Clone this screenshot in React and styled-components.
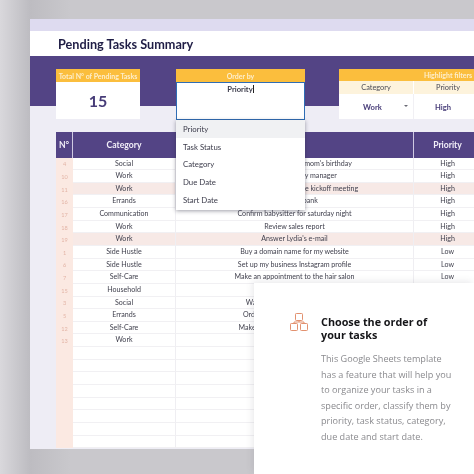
import React from "react";
import styled, { createGlobalStyle } from "styled-components";

const GlobalStyle = createGlobalStyle`
  html, body {
    margin: 0;
    padding: 0;
    width: 474px;
    height: 474px;
    overflow: hidden;
    background: #c9c8cc;
  }
  * {
    box-sizing: border-box;
  }
`;

const Page = styled.div`
  position: relative;
  width: 474px;
  height: 474px;
  overflow: hidden;
  padding: 19px 0 0 30px;
  background: linear-gradient(90deg, #d9d8dc 0, #bdbcc1 30px, #c9c8cc 70px);
  font-family: "Open Sans", "Liberation Sans", sans-serif;
  filter: blur(0.3px);
`;

const Sheet = styled.div`
  width: 444px;
  height: 430px;
  background: #eeedf5;
  overflow: hidden;
  font-family: Lato, "Open Sans", sans-serif;
`;

const TopStrip = styled.div`
  height: 12px;
  background: #dedbf0;
`;

const TitleBar = styled.div`
  height: 25px;
  padding-left: 28px;
  background: #fff;
  display: flex;
  align-items: center;
`;

const Title = styled.h1`
  margin: 0;
  font-size: 12.7px;
  font-weight: 700;
  color: #1f1d45;
`;

const Summary = styled.div`
  height: 76px;
  padding: 13px 0 0 26px;
  display: flex;
  align-items: flex-start;
  background: linear-gradient(#534485 50px, #eeedf5 50px);
`;

const TotalCard = styled.div`
  flex: none;
  width: 84px;
  height: 50px;
  margin-right: 36px;
  background: #fff;
`;

const YellowHead = styled.div`
  height: 13px;
  background: #fbbe3d;
  color: #fdeecb;
  font-size: 7px;
  font-weight: 700;
  display: flex;
  align-items: center;
  justify-content: center;
  white-space: nowrap;
`;

const TotalValue = styled.div`
  height: 37px;
  display: flex;
  align-items: center;
  justify-content: center;
  color: #473c78;
  font-size: 16px;
  font-weight: 700;
`;

const OrderBox = styled.div`
  flex: none;
  position: relative;
  width: 129px;
  margin-right: 34px;
`;

const OrderInput = styled.div`
  height: 38px;
  background: #fff;
  border: 1px solid #2f6db5;
  text-align: center;
  color: #3a3a4a;
  font-size: 7.6px;
  font-weight: 700;
  line-height: 13px;
`;

const Caret = styled.span`
  display: inline-block;
  width: 1px;
  height: 8px;
  background: #222;
  vertical-align: -1px;
`;

const Dropdown = styled.ul`
  position: absolute;
  top: 51px;
  left: 0;
  width: 100%;
  height: 90px;
  margin: 0;
  padding: 0;
  list-style: none;
  background: #fff;
  box-shadow: 0 1px 4px rgba(40, 40, 60, 0.45);
  z-index: 2;
`;

const DropdownItem = styled.li`
  height: 17.7px;
  padding-left: 7px;
  display: flex;
  align-items: center;
  font-size: 7.8px;
  color: #3b3b4a;
  background: ${(props) => (props.$active ? "#f0f1f3" : "#fff")};
`;

const Filters = styled.div`
  flex: none;
  width: 143px;
  height: 50px;
  background: #fff;
`;

const FilterHead = styled(YellowHead)`
  height: 12px;
  justify-content: flex-start;
  padding-left: 85px;
`;

const FilterGrid = styled.div`
  display: grid;
  grid-template-columns: 75px 68px;
  grid-template-rows: 13px 25px;
`;

const FilterLabel = styled.div`
  background: #fdf3dc;
  color: #4a4a55;
  font-size: 7.4px;
  display: flex;
  align-items: center;
  justify-content: center;
  border-right: ${(props) => (props.$first ? "1px solid #fff" : "0")};
`;

const FilterValue = styled.div`
  position: relative;
  padding-left: ${(props) => (props.$first ? "24px" : "21px")};
  color: #473c78;
  font-size: 7.6px;
  font-weight: 700;
  display: flex;
  align-items: center;
  border-right: ${(props) => (props.$first ? "1px solid #f1f0f4" : "0")};
`;

const SelectArrow = styled.span`
  position: absolute;
  right: 5px;
  top: 11px;
  border-left: 2px solid transparent;
  border-right: 2px solid transparent;
  border-top: 2px solid #6a6a75;
`;

const Table = styled.div`
  margin-left: 26px;
  display: grid;
  grid-template-columns: 17px 103px 238px 68px;
  grid-auto-rows: 12.65px;
`;

const HeadRow = styled(Table)`
  grid-auto-rows: 25.5px;
`;

const HeadCell = styled.div`
  background: #534485;
  border-right: 1px solid ${(props) => (props.$plain ? "#534485" : "#cfc9e2")};
  color: #f1eef8;
  font-size: 8.6px;
  font-weight: 700;
  display: flex;
  align-items: center;
  justify-content: center;
`;

const NumCell = styled.div`
  background: #fbe9e2;
  color: #e3b5a7;
  font-size: 5.6px;
  display: flex;
  align-items: center;
  justify-content: center;
`;

const Cell = styled.div`
  background: ${(props) => (props.$pink ? "#f7e9e6" : "#fff")};
  border-bottom: 1px solid #f1f0f3;
  border-right: 1px solid #efeef2;
  color: #3f3f4c;
  font-size: 7.1px;
  line-height: 11.6px;
  text-align: center;
  white-space: nowrap;
  overflow: hidden;
`;

const InfoCard = styled.section`
  position: absolute;
  left: 254px;
  top: 283px;
  width: 220px;
  height: 191px;
  padding: 32px 0 0 36px;
  display: grid;
  grid-template-columns: 31px 1fr;
  align-content: start;
  background: #fff;
  box-shadow: -2px -2px 6px rgba(90, 90, 110, 0.12);
  z-index: 3;
`;

const InfoIcon = styled.svg`
  width: 18px;
  height: 18px;
  margin: -2px 0 0 0;
`;

const InfoTitle = styled.h2`
  margin: 0 0 10px;
  font-size: 10.8px;
  line-height: 13px;
  font-weight: 700;
  color: #151518;
`;

const InfoText = styled.p`
  grid-column: 2;
  margin: 0;
  color: #8a8a8e;
  font-size: 9.1px;
  line-height: 15.5px;
  white-space: nowrap;
`;

const rows = [
  ["4", "Social", "Call the florist for my mom's birthday", "High"],
  ["10", "Work", "Send report to my manager", "High"],
  ["11", "Work", "Prepare the slides for the kickoff meeting", "High", true],
  ["16", "Errands", "Go to the bank", "High"],
  ["17", "Communication", "Confirm babysitter for saturday night", "High"],
  ["18", "Work", "Review sales report", "High"],
  ["19", "Work", "Answer Lydia's e-mail", "High", true],
  ["1", "Side Hustle", "Buy a domain name for my website", "Low"],
  ["6", "Side Hustle", "Set up my business Instagram profile", "Low"],
  ["7", "Self-Care", "Make an appointment to the hair salon", "Low"],
  ["15", "Household", "", ""],
  ["3", "Social", "Watch my friend's performance", ""],
  ["5", "Errands", "Order new glasses from the store", ""],
  ["12", "Self-Care", "Make an appointment to the dentist", ""],
  ["13", "Work", "", ""],
  ["", "", "", ""],
  ["", "", "", ""],
  ["", "", "", ""],
  ["", "", "", ""],
  ["", "", "", ""],
  ["", "", "", ""],
  ["", "", "", ""],
  ["", "", "", ""],
];

const orderOptions = ["Priority", "Task Status", "Category", "Due Date", "Start Date"];

const App = () => (
  <Page>
    <GlobalStyle />
    <Sheet>
      <TopStrip />
      <TitleBar>
        <Title>Pending Tasks Summary</Title>
      </TitleBar>
      <Summary>
        <TotalCard>
          <YellowHead>Total N° of Pending Tasks</YellowHead>
          <TotalValue>15</TotalValue>
        </TotalCard>
        <OrderBox>
          <YellowHead>Order by</YellowHead>
          <OrderInput>
            Priority
            <Caret />
          </OrderInput>
          <Dropdown>
            {orderOptions.map((option, i) => (
              <DropdownItem key={option} $active={i === 0}>
                {option}
              </DropdownItem>
            ))}
          </Dropdown>
        </OrderBox>
        <Filters>
          <FilterHead>Highlight filters</FilterHead>
          <FilterGrid>
            <FilterLabel $first>Category</FilterLabel>
            <FilterLabel>Priority</FilterLabel>
            <FilterValue $first>
              Work
              <SelectArrow />
            </FilterValue>
            <FilterValue>High</FilterValue>
          </FilterGrid>
        </Filters>
      </Summary>
      <HeadRow>
        <HeadCell>N°</HeadCell>
        <HeadCell $plain>Category</HeadCell>
        <HeadCell>Task</HeadCell>
        <HeadCell>Priority</HeadCell>
      </HeadRow>
      <Table>
        {rows.map(([num, category, task, priority, pink], i) => (
          <React.Fragment key={i}>
            <NumCell>{num}</NumCell>
            <Cell $pink={pink}>{category}</Cell>
            <Cell $pink={pink}>{task}</Cell>
            <Cell $pink={pink}>{priority}</Cell>
          </React.Fragment>
        ))}
      </Table>
    </Sheet>
    <InfoCard>
      <InfoIcon viewBox="0 0 18 18" fill="none" stroke="#e2916f" strokeWidth="1">
        <rect x="5.5" y="0.5" width="7" height="7" rx="0.8" />
        <rect x="0.5" y="10.5" width="7" height="7" rx="0.8" />
        <rect x="10.5" y="10.5" width="7" height="7" rx="0.8" />
        <path d="M9 7.5V9M4 10.5V9H14V10.5" />
      </InfoIcon>
      <InfoTitle>
        Choose the order of
        <br />
        your tasks
      </InfoTitle>
      <InfoText>
        This Google Sheets template
        <br />
        has a feature that will help you
        <br />
        to organize your tasks in a
        <br />
        specific order, classify them by
        <br />
        priority, task status, category,
        <br />
        due date and start date.
      </InfoText>
    </InfoCard>
  </Page>
);

export default App;
